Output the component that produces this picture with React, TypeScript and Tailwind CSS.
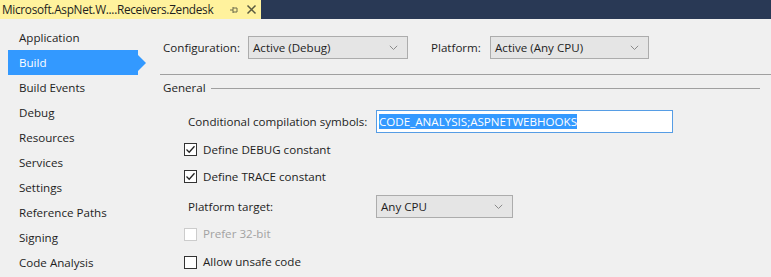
import React from 'react';

const font = { fontFamily: '"Segoe UI", "Open Sans", "Noto Sans", sans-serif' };

const navItems = [
  'Application',
  'Build',
  'Build Events',
  'Debug',
  'Resources',
  'Services',
  'Settings',
  'Reference Paths',
  'Signing',
  'Code Analysis',
];

function Chevron() {
  return (
    <svg width="9" height="6" viewBox="0 0 9 6" className="shrink-0">
      <path d="M0.8 0.8 L4.5 4.5 L8.2 0.8" fill="none" stroke="#8a8a8a" strokeWidth="1" />
    </svg>
  );
}

function Dropdown({ value, width }: { value: string; width: string }) {
  return (
    <div
      className={`${width} h-[23px] flex items-center justify-between pl-[4px] pr-[9px] bg-[#e5e5e5] border border-[#acacac] text-[#1e1e1e]`}
    >
      <span>{value}</span>
      <Chevron />
    </div>
  );
}

function CheckBox({ checked, disabled }: { checked?: boolean; disabled?: boolean }) {
  return (
    <div
      className={`w-[13px] h-[13px] shrink-0 flex items-center justify-center bg-white border ${
        disabled ? 'border-[#cccccc]' : 'border-[#333333]'
      }`}
    >
      {checked && (
        <svg width="11" height="11" viewBox="0 0 11 11">
          <path d="M1.5 5.5 L4.2 8.2 L9.5 2.2" fill="none" stroke="#222" strokeWidth="1.3" />
        </svg>
      )}
    </div>
  );
}

function CheckRow({
  label,
  checked,
  disabled,
  className,
}: {
  label: string;
  checked?: boolean;
  disabled?: boolean;
  className: string;
}) {
  return (
    <div className={`flex items-center pl-[24px] ${className}`}>
      <CheckBox checked={checked} disabled={disabled} />
      <span className={`ml-[6px] ${disabled ? 'text-[#a2a2a2]' : 'text-[#1e1e1e]'}`}>{label}</span>
    </div>
  );
}

export default function App() {
  return (
    <div className="w-[771px] h-[277px] overflow-hidden bg-[#f0f0f0] text-[11.6px]" style={font}>
      {/* document tab strip */}
      <div className="flex h-[19px] bg-[#293955]">
        <div className="flex items-center w-[261px] bg-[#fff29d] pl-[2px] text-[11.8px] tracking-[-0.3px] text-[#1e1e1e]">
          <span className="leading-none w-[217px] whitespace-nowrap">Microsoft.AspNet.W....Receivers.Zendesk</span>
          <svg width="10" height="10" viewBox="0 0 10 10" className="ml-[10px]">
            <path d="M1 5 H4 M4 2 V8 M4 3 H8 V7 H4" fill="none" stroke="#6b6b4c" strokeWidth="1" />
          </svg>
          <svg width="11" height="11" viewBox="0 0 11 11" className="ml-[7px]">
            <path d="M1.5 1.5 L9.5 9.5 M9.5 1.5 L1.5 9.5" stroke="#5a5a40" strokeWidth="1.5" />
          </svg>
        </div>
      </div>

      <div className="flex">
        {/* left nav */}
        <div className="w-[160px] shrink-0 pt-[6px]">
          {navItems.map((item) =>
            item === 'Build' ? (
              <div key={item} className="relative h-[25px] flex items-center">
                <div className="ml-[8px] w-[130px] h-full flex items-center pl-[11px] bg-[#3399ff] text-white">
                  {item}
                </div>
                <div className="w-0 h-0 border-y-[8px] border-y-transparent border-l-[8px] border-l-[#3399ff]" />
              </div>
            ) : (
              <div key={item} className="h-[25px] flex items-center pl-[19px] text-[#1e1e1e]">
                {item}
              </div>
            )
          )}
        </div>

        {/* right panel */}
        <div className="flex-1">
          <div className="flex items-center h-[23px] mt-[17px] pl-[3px] text-[#1e1e1e]">
            <span className="w-[85px]">Configuration:</span>
            <Dropdown value="Active (Debug)" width="w-[160px]" />
            <span className="ml-[23px] w-[59px]">Platform:</span>
            <Dropdown value="Active (Any CPU)" width="w-[159px]" />
          </div>

          <div className="mt-[15px] border-t border-[#a0a0a0]" />

          <div className="flex items-center h-[26px] pl-[3px] pr-[11px] text-[#1e1e1e]">
            <span>General</span>
            <div className="flex-1 ml-[5px] border-t border-[#a0a0a0]" />
          </div>

          <div className="flex items-center h-[23px] mt-[9px] pl-[28px] text-[#1e1e1e]">
            <span className="w-[188px]">Conditional compilation symbols:</span>
            <div className="w-[297px] h-[23px] flex items-center pl-[2px] bg-white border border-[#569de5]">
              <span className="bg-[#3399ff] text-white leading-[15px]">CODE_ANALYSIS;ASPNETWEBHOOKS</span>
            </div>
          </div>

          <CheckRow label="Define DEBUG constant" checked className="h-[27px] mt-[3px]" />
          <CheckRow label="Define TRACE constant" checked className="h-[27px]" />

          <div className="flex items-center h-[23px] mt-[5px] pl-[28px] text-[#1e1e1e]">
            <span className="w-[188px]">Platform target:</span>
            <Dropdown value="Any CPU" width="w-[137px]" />
          </div>

          <CheckRow label="Prefer 32-bit" disabled className="h-[24px] mt-[4px]" />
          <CheckRow label="Allow unsafe code" className="h-[26px] mt-[3px]" />
        </div>
      </div>
    </div>
  );
}
